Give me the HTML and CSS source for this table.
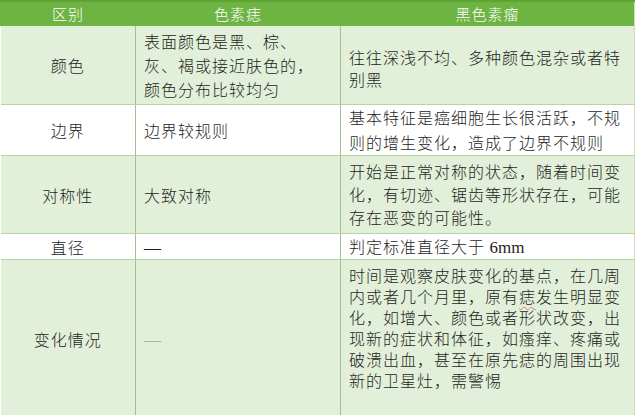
FILE: index.html
```html
<!DOCTYPE html>
<html lang="zh-CN">
<head>
<meta charset="utf-8">
<title>色素痣与黑色素瘤区别</title>
<link rel="stylesheet" href="styles.css">
</head>
<body>
<table class="cmp">
  <colgroup>
    <col class="c1"><col class="c2"><col class="c3">
  </colgroup>
  <thead>
    <tr class="head">
      <th>区别</th>
      <th>色素痣</th>
      <th>黑色素瘤</th>
    </tr>
  </thead>
  <tbody>
    <tr class="r1 band">
      <td class="label">颜色</td>
      <td class="lh-a">表面颜色是黑、棕、<br>灰、褐或接近肤色的，<br>颜色分布比较均匀</td>
      <td class="lh-b">往往深浅不均、多种颜色混杂或者特<br>别黑</td>
    </tr>
    <tr class="r2">
      <td class="label">边界</td>
      <td>边界较规则</td>
      <td class="lh-c">基本特征是癌细胞生长很活跃，不规<br>则的增生变化，造成了边界不规则</td>
    </tr>
    <tr class="r3 band">
      <td class="label">对称性</td>
      <td>大致对称</td>
      <td class="lh-d">开始是正常对称的状态，随着时间变<br>化，有切迹、锯齿等形状存在，可能<br>存在恶变的可能性。</td>
    </tr>
    <tr class="r4">
      <td class="label">直径</td>
      <td><span class="dash">—</span></td>
      <td>判定标准直径大于 <span class="latin">6mm</span></td>
    </tr>
    <tr class="r5 band">
      <td class="label">变化情况</td>
      <td class="faint"><span class="dash">—</span></td>
      <td class="top lh-e">时间是观察皮肤变化的基点，在几周<br>内或者几个月里，原有<span class="squiggle">痣</span>发生明显变<br>化，如增大、颜色或者形状改变，出<br>现新的症状和体征，如瘙痒、疼痛或<br>破溃出血，甚至在原先痣的周围出现<br>新的卫星灶，需警惕</td>
    </tr>
  </tbody>
</table>
</body>
</html>
```

FILE: styles.css
```css
html, body {
  margin: 0;
  padding: 0;
  background: #ffffff;
}

.cmp {
  border-collapse: collapse;
  table-layout: fixed;
  width: 634px;
  font-family: "Noto Sans CJK SC", "Liberation Serif", sans-serif;
  font-size: 16px;
  font-weight: 300;
  color: #1e1e1e;
  letter-spacing: 1px;
}

.c1 { width: 135px; }
.c2 { width: 205px; }
.c3 { width: 294px; }

.cmp th,
.cmp td {
  padding: 0 0 0 8px;
  vertical-align: middle;
  text-align: left;
  white-space: nowrap;
  line-height: 22px;
  border-left: 1px solid #a3c094;
  border-bottom: 1px solid #b5d6a0;
}

.cmp th:first-child,
.cmp td:first-child {
  border-left: none;
}

.cmp tr > *:last-child {
  border-right: 1px solid #c9e0ba;
}

.cmp .head th {
  background: #6eb443;
  color: #ffffff;
  font-weight: 300;
  font-size: 15px;
  line-height: 20px;
  text-align: center;
  padding: 0;
  height: 24px;
  border-top: 2px solid #5fa236;
  border-left: 1px solid #6eb443;
  border-bottom: none;
}

.cmp .band td { background: #e2f0d9; }

.cmp td.label {
  text-align: center;
  padding: 0;
}

.r1 td { height: 72px; }
.r2 td { height: 50px; }
.r3 td { height: 77px; }
.r4 td { height: 25px; }
.r5 td { height: 153px; }

.cmp td.lh-a { line-height: 24px; }
.cmp td.lh-b { line-height: 22px; padding-top: 6px; }
.cmp td.lh-c { line-height: 25px; }
.cmp td.lh-d { line-height: 23px; }
.cmp td.lh-e { line-height: 21px; }

.cmp td.top {
  vertical-align: top;
  padding-top: 5px;
}

.cmp td.faint { color: #a9b4a3; }

.dash {
  font-family: "Liberation Serif", serif;
  font-size: 17px;
  letter-spacing: 0;
}

.latin {
  font-family: "Liberation Serif", serif;
  font-size: 17px;
  letter-spacing: 0;
}

.squiggle {
  text-decoration: underline wavy #e07a7a;
  text-decoration-thickness: 1px;
  text-underline-offset: 3px;
}
```
